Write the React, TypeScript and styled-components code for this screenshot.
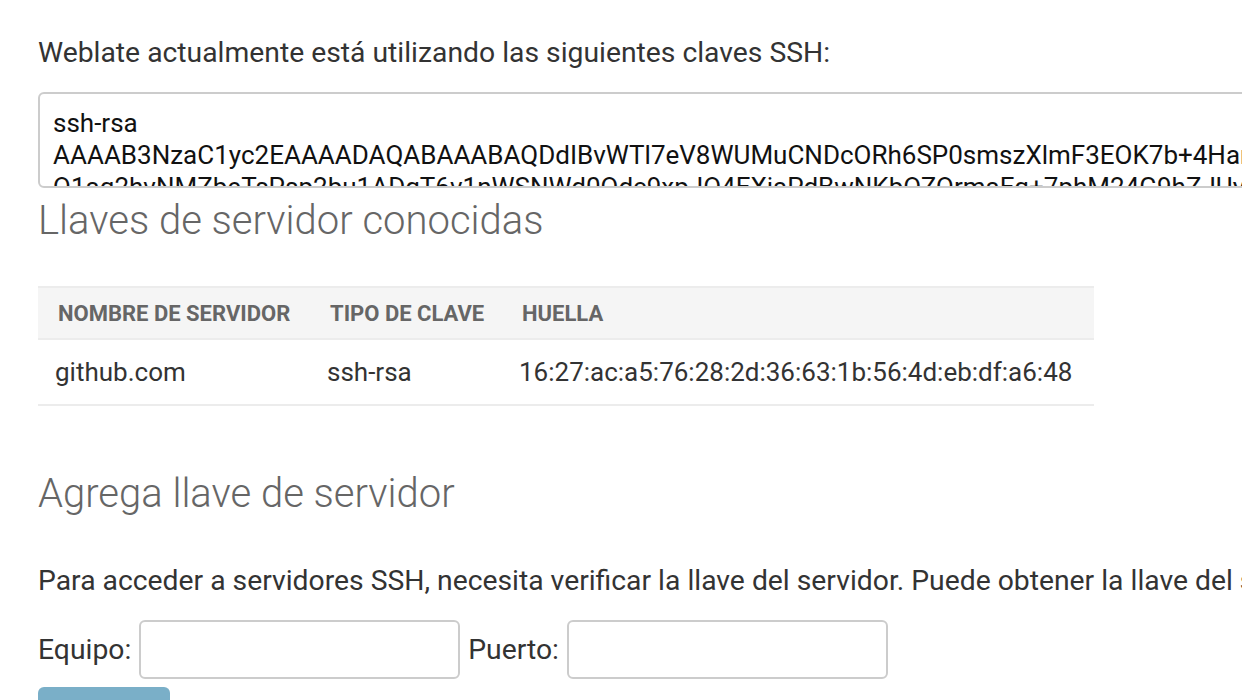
import React from "react";
import styled, { createGlobalStyle } from "styled-components";

const GlobalStyle = createGlobalStyle`
  html, body {
    margin: 0;
    padding: 0;
    background: #fff;
    overflow: hidden;
  }
  body {
    font-family: Roboto, "Liberation Sans", sans-serif;
    color: #333;
  }
`;

const SSH_KEY =
  "ssh-rsa AAAAB3NzaC1yc2EAAAADAQABAAABAQDdIBvWTl7eV8WUMuCNDcORh6SP0smszXlmF3EOK7b+4HarmmA2u4IZmfMi2OpVMoYf3pdQ1aq2hvNMZbeTsPsp2bu1ADgT6v1nWSNWd0Qdc9xpJO4EXiaPdBwNKbOZQrmaEq+7phM24G9hZJUy5xjYHaJtNT5bzJaiMGb1X3vRhy7mYjq3TtBSZb4kdAzvBkRqDzcYnE3eQp94ZuN3bOwwR7Ltl2yZ7P/4ynSbQcfRxuBWa9N+p5M0lC6ndgwYTg7FhM0v5LQr8kRaKjlJs4xq3G+dF1LhTkOeYvIeCmP2Ws8aXZnJ09BuG6k3RtS7VcMyd4jQpN1ewlB5xUHrFo weblate@example.com";

export default function App() {
  return (
    <>
      <GlobalStyle />
      <Page>
        <Lead>Weblate actualmente está utilizando las siguientes claves SSH:</Lead>
        <KeyBox readOnly value={SSH_KEY} />

        <Heading>Llaves de servidor conocidas</Heading>
        <HostTable>
          <thead>
            <tr>
              <HeadCell $width={272}>Nombre de servidor</HeadCell>
              <HeadCell $width={192}>Tipo de clave</HeadCell>
              <HeadCell>Huella</HeadCell>
            </tr>
          </thead>
          <tbody>
            <tr>
              <Cell>github.com</Cell>
              <Cell>ssh-rsa</Cell>
              <Cell>16:27:ac:a5:76:28:2d:36:63:1b:56:4d:eb:df:a6:48</Cell>
            </tr>
          </tbody>
        </HostTable>

        <Heading $spaced>Agrega llave de servidor</Heading>
        <Lead $nowrap>
          Para acceder a servidores SSH, necesita verificar la llave del servidor. Puede obtener la llave del servidor
          usando el siguiente formulario.
        </Lead>
        <Form>
          <Label>Equipo:</Label>
          <TextInput type="text" />
          <Label>Puerto:</Label>
          <TextInput type="text" />
        </Form>
        <SubmitButton type="button">Enviar</SubmitButton>
      </Page>
    </>
  );
}

const Page = styled.div`
  width: 1700px;
  padding: 38px 0 0 38px;
  box-sizing: border-box;
  display: flex;
  flex-direction: column;
  align-items: flex-start;
`;

const Lead = styled.p<{ $nowrap?: boolean }>`
  margin: 0;
  font-size: 28.3px;
  line-height: 30px;
  white-space: ${p => (p.$nowrap ? "nowrap" : "normal")};
`;

const KeyBox = styled.textarea`
  width: 1600px;
  height: 96px;
  margin-top: 24px;
  padding: 13px 13px 0;
  box-sizing: border-box;
  border: 2px solid #ccc;
  border-radius: 6px;
  font-family: Roboto, "Liberation Sans", sans-serif;
  font-size: 26px;
  line-height: 32px;
  color: #111;
  resize: none;
  overflow: hidden;
  outline: none;
`;

const Heading = styled.h3<{ $spaced?: boolean }>`
  margin: ${p => (p.$spaced ? "63px 0 47px" : "8px 0 0")};
  font-size: 40px;
  line-height: 50px;
  font-weight: 300;
  color: #666;
`;

const HostTable = styled.table`
  width: 1056px;
  margin-top: 40px;
  border-collapse: collapse;
  table-layout: fixed;
`;

const HeadCell = styled.th<{ $width?: number }>`
  width: ${p => (p.$width ? `${p.$width}px` : "auto")};
  height: 52px;
  padding: 0 17px 0 20px;
  box-sizing: border-box;
  text-align: left;
  vertical-align: middle;
  background: #f5f5f5;
  border-top: 2px solid #ececec;
  border-bottom: 2px solid #ececec;
  font-size: 22px;
  font-weight: 700;
  text-transform: uppercase;
  color: #666;
`;

const Cell = styled.td`
  height: 64px;
  padding: 0 17px;
  vertical-align: middle;
  border-bottom: 2px solid #ececec;
  font-size: 26px;
  color: #333;
`;

const Form = styled.div`
  display: flex;
  align-items: center;
  gap: 8px;
  margin-top: 24px;
`;

const Label = styled.label`
  font-size: 28.3px;
  color: #333;
`;

const TextInput = styled.input`
  width: 321px;
  height: 59px;
  box-sizing: border-box;
  border: 2px solid #ccc;
  border-radius: 6px;
  padding: 0 14px;
  font-size: 28px;
  font-family: Roboto, "Liberation Sans", sans-serif;
  outline: none;
`;

const SubmitButton = styled.button`
  margin-top: 8px;
  width: 132px;
  height: 56px;
  border: 0;
  border-radius: 6px;
  background: #7aafc8;
  color: #fff;
  font-size: 28px;
  font-family: Roboto, "Liberation Sans", sans-serif;
`;
